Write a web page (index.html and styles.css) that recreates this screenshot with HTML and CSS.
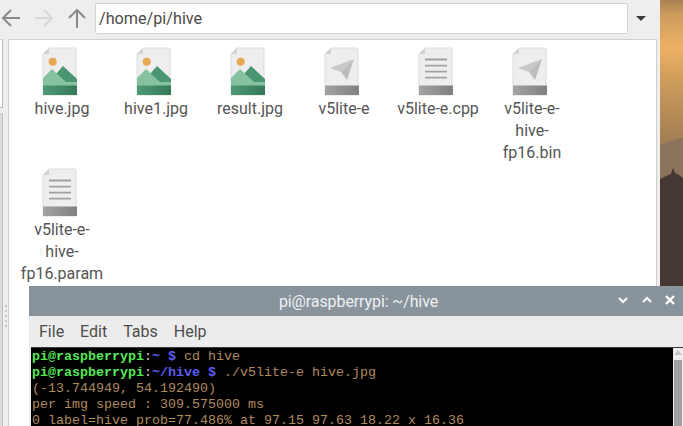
FILE: index.html
```html
<!DOCTYPE html>
<html lang="en">
<head>
<meta charset="utf-8">
<title>File manager and terminal</title>
<link rel="stylesheet" href="styles.css">
</head>
<body>
<svg class="defs" width="0" height="0">
  <defs>
    <linearGradient id="band-green" x1="0" x2="1" y1="0" y2="0"><stop offset="0" stop-color="#4f9a76"/><stop offset="1" stop-color="#35785a"/></linearGradient>
    <linearGradient id="band-grey" x1="0" x2="1" y1="0" y2="0"><stop offset="0" stop-color="#a3a3a3"/><stop offset="1" stop-color="#808080"/></linearGradient>
    <symbol id="i-image" viewBox="0 0 36 50">
      <path d="M7 1H33a1 1 0 0 1 1 1V48H1V7z" fill="#eeeeee" stroke="#dcdcdc"/>
      <path d="M1 7H7V1z" fill="#d2d2d2"/>
      <circle cx="10.700" cy="14.700" r="4" fill="#e5a951"/>
      <path d="M14 27 L21 19 L35 32 V37 H24z" fill="#4a9672"/>
      <path d="M1 31 L10 22 L24 35 H35 V39 H1z" fill="#86c2a0"/>
      <path d="M1 38.500H35V48H1z" fill="url(#band-green)"/>
    </symbol>
    <symbol id="i-exec" viewBox="0 0 36 50">
      <path d="M7 1H33a1 1 0 0 1 1 1V48H1V7z" fill="#eeeeee" stroke="#dcdcdc"/>
      <path d="M6 21 L30 12 L17 25z" fill="#c8c8c8"/>
      <path d="M1 7H7V1z" fill="#d2d2d2"/>
      <path d="M30 12 L23 33 L17 25z" fill="#bcbcbc"/>
      <path d="M1 38.500H35V48H1z" fill="url(#band-grey)"/>
    </symbol>
    <symbol id="i-text" viewBox="0 0 36 50">
      <path d="M7 1H33a1 1 0 0 1 1 1V48H1V7z" fill="#eeeeee" stroke="#dcdcdc"/>
      <path d="M1 7H7V1z" fill="#d2d2d2"/>
      <path d="M7 12.500H29M7 18.700H29M7 24.700H29M7 30.700H29" stroke="#a2a2a2" stroke-width="1.800"/>
      <path d="M1 38.500H35V48H1z" fill="url(#band-grey)"/>
    </symbol>
  </defs>
</svg>
<div class="desktop">
  <section class="filemanager">
    <header class="toolbar">
      <svg class="nav" width="22" height="22" viewBox="0 0 22 22"><path d="M20 11H3M11 3L3 11L11 19" fill="none" stroke="#8a8a8a" stroke-width="2"/></svg>
      <svg class="nav" width="22" height="22" viewBox="0 0 22 22"><path d="M2 11H19M11 3L19 11L11 19" fill="none" stroke="#d8d8d8" stroke-width="2"/></svg>
      <svg class="nav" width="22" height="22" viewBox="0 0 22 22"><path d="M11 21V3M3 11L11 3L19 11" fill="none" stroke="#8a8a8a" stroke-width="2"/></svg>
      <div class="path">/home/pi/hive</div>
      <div class="caret"></div>
    </header>
    <div class="panes">
      <aside class="side">
        <div class="side-top"></div>
        <div class="side-bottom"></div>
      </aside>
      <div class="handle"><i></i><i></i><i></i><i></i><i></i></div>
      <main class="files">
        <figure class="file"><svg class="ficon"><use href="#i-image"/></svg><figcaption>hive.jpg</figcaption></figure>
        <figure class="file"><svg class="ficon"><use href="#i-image"/></svg><figcaption>hive1.jpg</figcaption></figure>
        <figure class="file"><svg class="ficon"><use href="#i-image"/></svg><figcaption>result.jpg</figcaption></figure>
        <figure class="file"><svg class="ficon"><use href="#i-exec"/></svg><figcaption>v5lite-e</figcaption></figure>
        <figure class="file"><svg class="ficon"><use href="#i-text"/></svg><figcaption>v5lite-e.cpp</figcaption></figure>
        <figure class="file"><svg class="ficon"><use href="#i-exec"/></svg><figcaption>v5lite-e-<br>hive-<br>fp16.bin</figcaption></figure>
        <figure class="file"><svg class="ficon"><use href="#i-text"/></svg><figcaption>v5lite-e-<br>hive-<br>fp16.param</figcaption></figure>
      </main>
    </div>
  </section>
  <svg class="wallpaper" width="23" height="426" viewBox="0 0 23 426">
    <defs>
      <linearGradient id="sky" x1="0" x2="0" y1="0" y2="1">
        <stop offset="0" stop-color="#a98152"/>
        <stop offset="0.1" stop-color="#cc9c5e"/>
        <stop offset="0.33" stop-color="#eeb163"/>
        <stop offset="0.55" stop-color="#cf9c5c"/>
        <stop offset="0.8" stop-color="#b48a55"/>
        <stop offset="1" stop-color="#a07c52"/>
      </linearGradient>
    </defs>
    <rect width="23" height="145" fill="url(#sky)"/>
    <path d="M0 145L8 142L16 139L23 138V190H0z" fill="#8b735c"/>
    <path d="M0 179L6 176L11 174L13 168L15 173L19 175L23 178V426H0z" fill="#453733"/>
  </svg>
  <section class="terminal">
    <header class="titlebar">
      <span class="title">pi@raspberrypi: ~/hive</span>
      <svg class="winbtn btn-min" width="12" height="12" viewBox="0 0 12 12"><path d="M2 4L6 8L10 4" fill="none" stroke="#fff" stroke-width="2"/></svg>
      <svg class="winbtn btn-max" width="12" height="12" viewBox="0 0 12 12"><path d="M2 8L6 4L10 8" fill="none" stroke="#fff" stroke-width="2"/></svg>
      <svg class="winbtn btn-close" width="12" height="12" viewBox="0 0 12 12"><path d="M2 2L10 10M10 2L2 10" fill="none" stroke="#fff" stroke-width="2.400"/></svg>
    </header>
    <nav class="menubar"><span>File</span><span>Edit</span><span>Tabs</span><span>Help</span></nav>
    <div class="console">
      <pre class="output"><b class="g">pi@raspberrypi</b><span class="w">:</span><b class="b">~ $</b> cd hive
<b class="g">pi@raspberrypi</b><span class="w">:</span><b class="b">~/hive $</b> ./v5lite-e hive.jpg
(-13.744949, 54.192490)
per img speed : 309.575000 ms
0 label=hive prob=77.486% at 97.15 97.63 18.22 x 16.36</pre>
      <div class="scrollbar"><div class="arrow"></div><div class="thumb"></div></div>
    </div>
  </section>
</div>
</body>
</html>
```
FILE: styles.css
```css
* { box-sizing: border-box; }
html, body { margin: 0; padding: 0; }
body { width: 683px; height: 426px; overflow: hidden; font-family: Roboto, sans-serif; }
.defs { position: absolute; }
.desktop { position: relative; width: 683px; height: 426px; overflow: hidden; display: flex; background: #4a3a34; }

.filemanager { width: 660px; height: 426px; flex: none; background: #eeeeee; display: flex; flex-direction: column; }
.toolbar { height: 39px; flex: none; display: flex; align-items: flex-start; padding: 3px 0 0 0; }
.nav { margin-top: 4px; margin-right: 11px; flex: none; }
.path { width: 533px; height: 31px; margin-left: -4px; background: #fff; border: 1px solid #d4d4d4; border-radius: 2px; color: #4a4a4a; font-size: 16.200px; line-height: 29px; padding-left: 3px; }
.caret { width: 0; height: 0; margin: 13px 0 0 8px; border: 5px solid transparent; border-top-color: #3c3c3c; }

.panes { flex: 1; display: flex; min-height: 0; }
.side { width: 3px; flex: none; display: flex; flex-direction: column; gap: 5px; }
.side-top { height: 69px; flex: none; background: #fff; border-right: 1px solid #bdbdbd; border-top: 1px solid #cfcfcf; border-bottom: 1px solid #bdbdbd; }
.side-bottom { flex: 1; background: #dcdcdc; border-right: 1px solid #bdbdbd; border-top: 1px solid #cfcfcf; }
.handle { width: 5px; flex: none; display: flex; flex-direction: column; gap: 3px; align-items: center; justify-content: flex-start; padding-top: 266px; }
.handle i { width: 2px; height: 2px; flex: none; background: #c4c4c4; }
.files { width: 649px; flex: none; background: #fff; border: 1px solid #cfcfcf; border-bottom: 0; display: grid; grid-template-columns: repeat(6, 94px); grid-auto-rows: 121px; padding: 7px 0 0 4px; align-content: start; }
.file { margin: 0; display: flex; flex-direction: column; align-items: center; color: #555555; font-size: 16px; line-height: 22px; text-align: center; }
.ficon { width: 36px; height: 50px; flex: none; filter: blur(0.35px); }
.file figcaption { margin-top: 1px; padding-left: 4px; white-space: nowrap; }

.wallpaper { flex: none; display: block; }

.terminal { position: absolute; left: 29px; top: 286px; width: 654px; height: 140px; background: #ececec; border-radius: 3px 3px 0 0; display: flex; flex-direction: column; }
.titlebar { height: 30px; flex: none; background: #88939c; color: #eef0f2; position: relative; display: flex; align-items: center; justify-content: center; font-size: 16px; padding-left: 5px; }
.title { letter-spacing: -0.1px; }
.winbtn { position: absolute; top: 8px; }
.btn-min { left: 588px; }
.btn-max { left: 612px; }
.btn-close { left: 635px; }
.menubar { height: 31px; flex: none; display: flex; gap: 16px; padding: 0 0 0 10px; align-items: center; color: #4c4c4c; font-size: 16px; }
.console { flex: 1; min-height: 0; margin-left: 2px; background: #000; display: flex; overflow: hidden; border-top: 1px solid #3a3a3a; }
.output { flex: 1; margin: 0; padding: 1px 0 0 1px; font-family: "Liberation Mono", monospace; font-size: 13.330px; line-height: 16px; color: #b08a5e; white-space: pre; overflow: hidden; }
.g { color: #55e855; font-weight: 700; }
.b { color: #5c5cf0; font-weight: 700; }
.w { color: #c8c8c8; }
.scrollbar { width: 10px; flex: none; background: #ececec; display: flex; flex-direction: column; align-items: center; padding: 2px 0 0 0; }
.arrow { width: 0; height: 0; border: 4px solid transparent; border-top: 0; border-bottom: 5px solid #c4c4c4; }
.thumb { width: 8px; flex: 1; margin-top: 5px; background: #a0a0a0; }
```
